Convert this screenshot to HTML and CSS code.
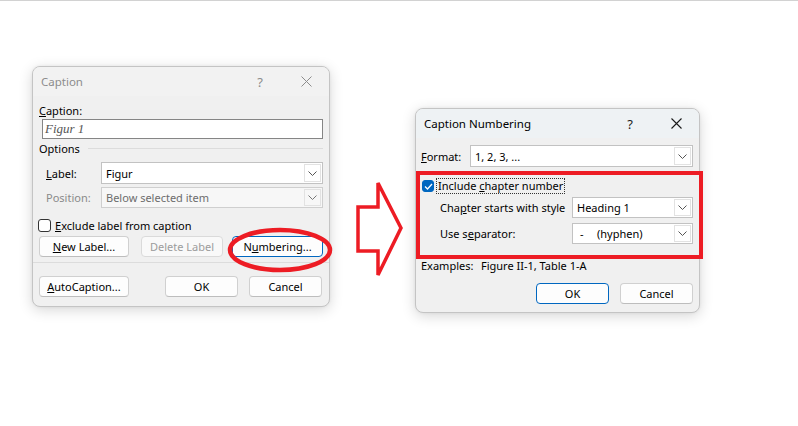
FILE: index.html
```html
<!DOCTYPE html>
<html lang="en">
<head>
<meta charset="utf-8">
<title>Caption dialogs</title>
<link rel="stylesheet" href="styles.css">
</head>
<body>
<div class="desk">

  <!-- Caption dialog (inactive) -->
  <section class="dialog dlg-caption">
    <header class="titlebar inactive">
      <span class="title">Caption</span>
      <span class="tb-btn">?</span>
      <span class="tb-btn"><svg width="11" height="11" viewBox="0 0 11 11"><path d="M0.5 0.5 L10.5 10.5 M10.5 0.5 L0.5 10.5" stroke="currentColor" stroke-width="1" fill="none"/></svg></span>
    </header>
    <div class="cap-body">
      <div class="cap-label"><u>C</u>aption:</div>
      <div class="cap-input">Figur 1</div>
      <div class="group-row"><span>Options</span><span class="group-line"></span></div>
      <div class="field-row r-label">
        <span class="field-lbl"><u>L</u>abel:</span>
        <div class="combo">
          <span class="combo-val">Figur</span>
          <span class="combo-btn"><svg width="9" height="5" viewBox="0 0 9 5"><path d="M0.5 0.5 L4.5 4.5 L8.5 0.5" stroke="#555" fill="none"/></svg></span>
        </div>
      </div>
      <div class="field-row r-pos">
        <span class="field-lbl disabled">Position:</span>
        <div class="combo disabled">
          <span class="combo-val">Below selected item</span>
          <span class="combo-btn"><svg width="9" height="5" viewBox="0 0 9 5"><path d="M0.5 0.5 L4.5 4.5 L8.5 0.5" stroke="#777" fill="none"/></svg></span>
        </div>
      </div>
      <div class="check-row">
        <span class="checkbox"></span>
        <span><u>E</u>xclude label from caption</span>
      </div>
      <div class="btn-row r-mid">
        <span class="btn b-new"><u>N</u>ew Label...</span>
        <span class="btn b-del disabled">Delete Label</span>
        <span class="btn b-num focus">N<u>u</u>mbering...</span>
      </div>
      <div class="sep"></div>
      <div class="btn-row r-bottom">
        <span class="btn b-auto"><u>A</u>utoCaption...</span>
        <span class="btn b-ok">OK</span>
        <span class="btn b-cancel">Cancel</span>
      </div>
    </div>
  </section>

  <!-- Arrow pointing from the first dialog to the second -->
  <svg class="arrow" width="52" height="102" viewBox="0 0 52 102">
    <polygon points="4,28 24,28 24,4 47,49 24,96 24,72 4,72" fill="#fff" stroke="#ed1c24" stroke-width="3.5" stroke-linejoin="miter"/>
  </svg>

  <!-- Ring around the Numbering button -->
  <svg class="ring" width="110" height="50" viewBox="0 0 110 50">
    <ellipse cx="54" cy="24" rx="50" ry="20" fill="none" stroke="#ed1c24" stroke-width="4.5"/>
  </svg>

  <!-- Caption Numbering dialog (active) -->
  <section class="dialog dlg-num">
    <header class="titlebar active">
      <span class="title">Caption Numbering</span>
      <span class="tb-btn">?</span>
      <span class="tb-btn"><svg width="11" height="11" viewBox="0 0 11 11"><path d="M0.5 0.5 L10.5 10.5 M10.5 0.5 L0.5 10.5" stroke="currentColor" stroke-width="1.1" fill="none"/></svg></span>
    </header>
    <div class="num-body">
      <div class="field-row r-format">
        <span class="num-lbl"><u>F</u>ormat:</span>
        <div class="combo">
          <span class="combo-val">1, 2, 3, ...</span>
          <span class="combo-btn"><svg width="9" height="5" viewBox="0 0 9 5"><path d="M0.5 0.5 L4.5 4.5 L8.5 0.5" stroke="#555" fill="none"/></svg></span>
        </div>
      </div>
      <div class="check-row r-include">
        <span class="checkbox checked"><svg width="9" height="7" viewBox="0 0 9 7"><path d="M1 3.5 L3.5 6 L8 1" stroke="#fff" stroke-width="1.3" fill="none"/></svg></span>
        <span class="focus-text">Include <u>c</u>hapter number</span>
      </div>
      <div class="field-row r-style">
        <span class="sub-lbl">Cha<u>p</u>ter starts with style</span>
        <div class="combo">
          <span class="combo-val">Heading 1</span>
          <span class="combo-btn"><svg width="9" height="5" viewBox="0 0 9 5"><path d="M0.5 0.5 L4.5 4.5 L8.5 0.5" stroke="#555" fill="none"/></svg></span>
        </div>
      </div>
      <div class="field-row r-sep">
        <span class="sub-lbl">Use s<u>e</u>parator:</span>
        <div class="combo">
          <span class="combo-val"><span class="sep-char">-</span>(hyphen)</span>
          <span class="combo-btn"><svg width="9" height="5" viewBox="0 0 9 5"><path d="M0.5 0.5 L4.5 4.5 L8.5 0.5" stroke="#555" fill="none"/></svg></span>
        </div>
      </div>
      <div class="examples"><span class="ex-lbl">Examples:</span><span>Figure II-1, Table 1-A</span></div>
      <div class="btn-row r-num-bottom">
        <span class="btn b-ok default">OK</span>
        <span class="btn b-cancel">Cancel</span>
      </div>
    </div>
  </section>

  <!-- Highlight box around the chapter options -->
  <div class="highlight"></div>
</div>
</body>
</html>
```

FILE: styles.css
```css
* { box-sizing: border-box; }

html, body {
  margin: 0;
  padding: 0;
  background: #fff;
}

body {
  font-family: "Segoe UI", "Noto Sans", sans-serif;
  font-size: 11px;
  color: #000;
}

.desk {
  position: relative;
  width: 798px;
  height: 426px;
  border-top: 1px solid #d2d2d2;
  overflow: hidden;
}

/* ---------- dialog windows ---------- */
.dialog {
  position: absolute;
  background: #f0f0f0;
  border: 1px solid #c4c4c4;
  border-radius: 8px;
  box-shadow: 0 3px 14px rgba(0, 0, 0, 0.16), 0 0 3px rgba(0, 0, 0, 0.06);
  overflow: hidden;
}

.dlg-caption {
  left: 32px;
  top: 65px;
  width: 298px;
  height: 241px;
}

.dlg-num {
  left: 415px;
  top: 107px;
  width: 285px;
  height: 205px;
}

.titlebar {
  display: flex;
  align-items: center;
  height: 29px;
}

.titlebar.active { background: #eef2f4; color: #000; }
.titlebar.inactive { background: #f2f2f2; color: #8c8c8c; }

.titlebar .title {
  flex: 1;
  padding-left: 8px;
  font-size: 11.5px;
}

.tb-btn {
  width: 46px;
  height: 29px;
  display: flex;
  align-items: center;
  justify-content: center;
  font-size: 13px;
}

.titlebar.active .tb-btn { color: #1a1a1a; }

/* ---------- shared controls ---------- */
.combo {
  flex: 1;
  display: flex;
  align-items: stretch;
  background: #fff;
  border: 1px solid #c2c2c2;
  height: 100%;
}

.combo-val {
  flex: 1;
  display: flex;
  align-items: center;
  padding-left: 4px;
  white-space: nowrap;
}

.combo-btn {
  width: 17px;
  margin: 1px;
  border: 1px solid #e2e2e2;
  background: #fff;
  display: flex;
  align-items: center;
  justify-content: center;
}

.combo.disabled { background: #f7f7f7; color: #6d6d6d; border-color: #cfcfcf; }
.combo.disabled .combo-btn { background: #f7f7f7; }

.disabled { color: #8a8a8a; }

.field-row {
  display: flex;
  align-items: center;
}

.check-row {
  display: flex;
  align-items: center;
}

.checkbox {
  flex-shrink: 0;
  width: 13px;
  height: 13px;
  border: 1px solid #333;
  border-radius: 3px;
  background: #fff;
  display: flex;
  align-items: center;
  justify-content: center;
}

.checkbox.checked {
  background: #0067c0;
  border-color: #0067c0;
}

.btn {
  display: flex;
  align-items: center;
  justify-content: center;
  background: #fdfdfd;
  border: 1px solid #d0d0d0;
  border-bottom-color: #bdbdbd;
  border-radius: 4px;
  height: 100%;
  white-space: nowrap;
}

.btn.disabled { color: #9c9c9c; background: #f9f9f9; border-color: #dadada; }
.btn.focus { border: 1px solid #0067c0; box-shadow: inset 0 0 0 1px #fff; }
.btn.default { border: 1px solid #0067c0; }

.btn-row { display: flex; }

/* ---------- Caption dialog body ---------- */
.cap-body {
  display: flex;
  flex-direction: column;
  padding: 0 6px;
}

.cap-label {
  margin-top: 6px;
  height: 17px;
  line-height: 17px;
}

.cap-input {
  margin-left: 3px;
  height: 20px;
  background: #fff;
  border: 1px solid #858585;
  font-family: "Liberation Serif", "Times New Roman", serif;
  font-style: italic;
  font-size: 13px;
  color: #555;
  padding-left: 2px;
  line-height: 18px;
}

.group-row {
  display: flex;
  align-items: center;
  height: 18px;
}

.group-line {
  flex: 1;
  margin-left: 8px;
  border-top: 1px solid #dcdcdc;
}

.field-lbl {
  flex-shrink: 0;
  width: 62px;
  padding-left: 7px;
}

.r-label { margin-top: 5px; height: 22px; }
.r-pos { margin-top: 3px; height: 21px; }

.dlg-caption .check-row {
  margin-top: 9px;
  height: 16px;
}

.dlg-caption .check-row .checkbox { margin-left: -1px; margin-right: 4px; }

.r-mid { margin-top: 3px; height: 21px; }
.b-new { width: 90px; }
.b-del { width: 82px; margin-left: 12px; }
.b-num { width: 91px; margin-left: 9px; }

.sep {
  margin: 5px -6px 0;
  border-top: 1px solid #dcdcdc;
}

.r-bottom { margin-top: 13px; height: 21px; }
.b-auto { width: 90px; }
.dlg-caption .b-ok { width: 73px; margin-left: 36px; }
.dlg-caption .b-cancel { width: 73px; margin-left: 11px; }

/* ---------- Caption Numbering dialog body ---------- */
.num-body {
  display: flex;
  flex-direction: column;
  padding: 0 6px 0 5px;
}

.r-format { margin-top: 7px; height: 22px; }
.num-lbl { flex-shrink: 0; width: 49px; }

.r-include {
  margin-top: 11px;
  height: 16px;
}

.r-include .checkbox {
  width: 12px;
  height: 12px;
  margin-left: 1px;
  margin-right: 2px;
}

.focus-text {
  border: 1px dotted #333;
  padding: 0 1px;
  line-height: 14px;
}

.sub-lbl {
  flex-shrink: 0;
  width: 151px;
  padding-left: 19px;
}

.r-style { margin-top: 3px; height: 21px; }
.r-sep { margin-top: 5px; height: 21px; }

.sep-char {
  display: inline-block;
  width: 20px;
  padding-left: 3px;
}

.examples {
  margin-top: 13px;
  height: 17px;
  line-height: 17px;
  display: flex;
}

.ex-lbl { flex-shrink: 0; width: 60px; }

.r-num-bottom {
  margin-top: 9px;
  height: 21px;
  justify-content: flex-end;
}

.dlg-num .b-ok { width: 73px; }
.dlg-num .b-cancel { width: 73px; margin-left: 11px; }

/* ---------- annotations drawn over the dialogs ---------- */
.arrow {
  position: absolute;
  left: 354px;
  top: 178px;
}

.ring {
  position: absolute;
  left: 226px;
  top: 225px;
}

.highlight {
  position: absolute;
  left: 416px;
  top: 170px;
  width: 287px;
  height: 88px;
  border: 4px solid #ed1c24;
}
```
